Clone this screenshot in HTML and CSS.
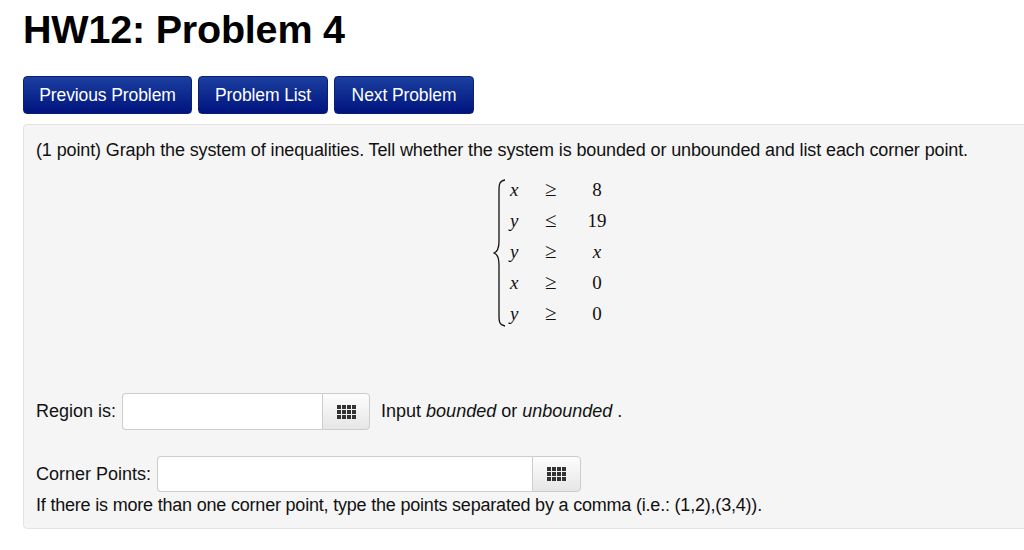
FILE: index.html
```html
<!DOCTYPE html>
<html>
<head>
<meta charset="utf-8">
<link rel="stylesheet" href="styles.css">
</head>
<body>
<div class="page">
  <h1 class="title">HW12: Problem 4</h1>
  <div class="nav">
    <a class="btn b1">Previous Problem</a>
    <a class="btn b2">Problem List</a>
    <a class="btn b3">Next Problem</a>
  </div>
  <div class="problem">
    <p class="intro">(1 point) Graph the system of inequalities. Tell whether the system is bounded or unbounded and list each corner point.</p>
    <div class="math">
      <svg class="brace" width="14" height="148" viewBox="0 0 14 148">
        <path d="M12 1 C6 2 6 6 6 12 L6 62 C6 70 4 73 1 74 C4 75 6 78 6 86 L6 136 C6 142 6 146 12 147" fill="none" stroke="#111" stroke-width="1.3"/>
      </svg>
      <div class="rows">
        <div class="row"><span class="v">x</span><span class="op">≥</span><span class="r">8</span></div>
        <div class="row"><span class="v">y</span><span class="op">≤</span><span class="r">19</span></div>
        <div class="row"><span class="v">y</span><span class="op">≥</span><span class="r var">x</span></div>
        <div class="row"><span class="v">x</span><span class="op">≥</span><span class="r">0</span></div>
        <div class="row"><span class="v">y</span><span class="op">≥</span><span class="r">0</span></div>
      </div>
    </div>
    <div class="field region">
      <span class="label">Region is:</span>
      <div class="group g1">
        <span class="box"></span>
        <span class="kbtn"><span class="grid"><i></i><i></i><i></i><i></i><i></i><i></i><i></i><i></i><i></i><i></i><i></i><i></i></span></span>
      </div>
      <span class="hint">Input <em>bounded</em> or <em>unbounded</em> .</span>
    </div>
    <div class="field corner">
      <span class="label">Corner Points:</span>
      <div class="group g2">
        <span class="box"></span>
        <span class="kbtn"><span class="grid"><i></i><i></i><i></i><i></i><i></i><i></i><i></i><i></i><i></i><i></i><i></i><i></i></span></span>
      </div>
    </div>
    <p class="note">If there is more than one corner point, type the points separated by a comma (i.e.: (1,2),(3,4)).</p>
  </div>
</div>
</body>
</html>
```
FILE: styles.css
```css
html, body { margin: 0; padding: 0; background: #fff; }
body { font-family: "Liberation Sans", Arial, sans-serif; color: #111; overflow: hidden; }
.page { padding-left: 23px; width: 1100px; }
.title { font-size: 39.5px; font-weight: bold; margin: 0; padding-top: 7px; line-height: 45px; color: #000; letter-spacing: -0.2px; }
.nav { display: flex; gap: 6px; margin-top: 24px; }
.btn {
  display: block; height: 38px; box-sizing: border-box; padding: 0;
  text-align: center; white-space: nowrap;
  line-height: 36px; font-size: 17.5px; color: #fff; letter-spacing: -0.1px;
  background: linear-gradient(#1b3f9f, #00147f);
  border: 1px solid #0a2070; border-radius: 4px;
}
.b1 { width: 169px; }
.b2 { width: 130px; }
.b3 { width: 140px; }
.problem {
  margin-top: 10px; background: #f5f5f5; border: 1px solid #e3e3e3; border-radius: 4px;
  padding: 14px 12px 12px; height: 405px; box-sizing: border-box;
}
.intro { margin: 0; font-size: 18px; line-height: 22px; letter-spacing: -0.12px; }
.math { display: flex; margin-left: 457px; margin-top: 13px; align-items: flex-start; }
.brace { margin-top: 5px; }
.rows { margin-left: 3px; font-family: "Liberation Serif", "Times New Roman", serif; font-size: 19px; }
.row { display: flex; height: 31px; align-items: center; }
.v { width: 35px; font-style: italic; }
.op { width: 39px; font-size: 21px; }
.r { width: 26px; text-align: center; }
.r.var { font-style: italic; }
.field { display: flex; align-items: center; font-size: 18px; }
.region { margin-top: 64px; }
.corner { margin-top: 26px; }
.label { margin-right: 6px; }
.group { display: flex; height: 37px; }
.g2 { height: 36px; }
.box { display: block; background: #fff; border: 1px solid #ccc; border-right: none; border-radius: 4px 0 0 4px; box-sizing: border-box; }
.g1 .box { width: 200px; }
.g2 .box { width: 375px; }
.kbtn {
  display: flex; align-items: center; justify-content: center; width: 48px; box-sizing: border-box;
  border: 1px solid #ccc; border-radius: 0 4px 4px 0;
  background: linear-gradient(#fdfdfd, #e6e6e6);
}
.g2 .kbtn { width: 49px; }
.grid { display: grid; grid-template-columns: repeat(4, 4px); grid-auto-rows: 4px; gap: 1px; }
.grid i { display: block; background: #333; }
.hint { margin-left: 11px; }
.note { margin: 2px 0 0; font-size: 18px; line-height: 22px; letter-spacing: -0.2px; }
```
